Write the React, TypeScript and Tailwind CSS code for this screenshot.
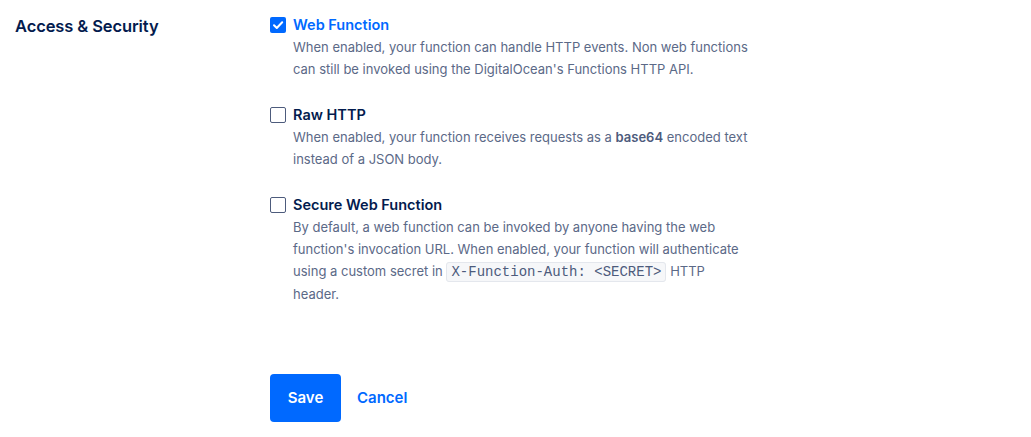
import React, { useState } from "react";

type Option = {
  key: string;
  label: string;
  description: React.ReactNode;
};

const OPTIONS: Option[] = [
  {
    key: "web",
    label: "Web Function",
    description: (
      <>
        When enabled, your function can handle HTTP events. Non web functions
        can still be invoked using the DigitalOcean's Functions HTTP API.
      </>
    ),
  },
  {
    key: "raw",
    label: "Raw HTTP",
    description: (
      <>
        When enabled, your function receives requests as a{" "}
        <strong className="font-semibold text-[#4d5b7c]">base64</strong> encoded text
        instead of a JSON body.
      </>
    ),
  },
  {
    key: "secure",
    label: "Secure Web Function",
    description: (
      <>
        By default, a web function can be invoked by anyone having the web
        function's invocation URL. When enabled, your function will authenticate
        using a custom secret in{" "}
        <code className="rounded-[3px] border border-[#e4e7ed] bg-[#f6f7f9] px-[4px] py-[1px] font-['Liberation_Mono',monospace] text-[14px] text-[#4d5b7c]">
          X-Function-Auth: &lt;SECRET&gt;
        </code>{" "}
        HTTP header.
      </>
    ),
  },
];

export default function App() {
  const [checked, setChecked] = useState<Record<string, boolean>>({
    web: true,
    raw: false,
    secure: false,
  });

  return (
    <div className="flex h-[437px] w-[1031px] bg-white font-['Inter',sans-serif]">
      <div className="w-[270px] shrink-0 pl-[15px] pt-[14px]">
        <h2 className="text-[16.5px] font-semibold tracking-[-0.1px] text-[#031b4e]">
          Access &amp; Security
        </h2>
      </div>

      <div className="flex flex-col pt-[13px]">
        <div className="flex flex-col gap-[23px]">
          {OPTIONS.map((opt) => {
            const on = checked[opt.key];
            return (
              <label key={opt.key} className="flex cursor-pointer items-start gap-[7px]">
                <span
                  className={`mt-[4px] flex h-[16px] w-[16px] shrink-0 items-center justify-center rounded-[2px] ${
                    on ? "bg-[#0069ff]" : "border-[1.5px] border-[#4d5b7c] bg-white"
                  }`}
                  onClick={() => setChecked({ ...checked, [opt.key]: !on })}
                >
                  {on && (
                    <svg width="12" height="12" viewBox="0 0 12 12" fill="none">
                      <path
                        d="M2 6.2 L4.8 9 L10.2 3.2"
                        stroke="white"
                        strokeWidth="2"
                        strokeLinecap="round"
                        strokeLinejoin="round"
                      />
                    </svg>
                  )}
                </span>
                <div className="w-[456px]">
                  <p
                    className={`text-[14.5px] font-semibold leading-[23px] ${
                      on ? "text-[#0069ff]" : "text-[#031b4e]"
                    }`}
                  >
                    {opt.label}
                  </p>
                  <p className="text-[13px] leading-[22px] text-[#5b6987]">
                    {opt.description}
                  </p>
                </div>
              </label>
            );
          })}
        </div>

        <div className="mt-[69px] flex items-center gap-[16px]">
          <button className="h-[48px] w-[71px] rounded-[4px] bg-[#0069ff] text-[15px] font-semibold text-white">
            Save
          </button>
          <button className="text-[15px] font-semibold text-[#0069ff]">Cancel</button>
        </div>
      </div>
    </div>
  );
}
